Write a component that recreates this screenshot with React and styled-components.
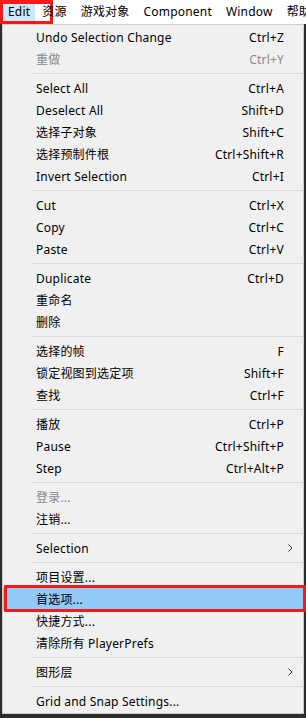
import styled, { createGlobalStyle } from 'styled-components'

const GlobalStyle = createGlobalStyle`
    html, body {
        margin: 0;
        padding: 0;
        background: #2c2c2c;
    }
    body {
        font-family: "Noto Sans", "Noto Sans CJK SC", sans-serif;
        font-size: 12px;
        letter-spacing: 0.2px;
        color: #000;
        overflow: hidden;
    }
`

const topMenus = ['Edit', '资源', '游戏对象', 'Component', 'Window', '帮助']

// '-' = separator
const items = [
    { label: 'Undo Selection Change', key: 'Ctrl+Z' },
    { label: '重做', key: 'Ctrl+Y', disabled: true },
    '-',
    { label: 'Select All', key: 'Ctrl+A' },
    { label: 'Deselect All', key: 'Shift+D' },
    { label: '选择子对象', key: 'Shift+C' },
    { label: '选择预制件根', key: 'Ctrl+Shift+R' },
    { label: 'Invert Selection', key: 'Ctrl+I' },
    '-',
    { label: 'Cut', key: 'Ctrl+X' },
    { label: 'Copy', key: 'Ctrl+C' },
    { label: 'Paste', key: 'Ctrl+V' },
    '-',
    { label: 'Duplicate', key: 'Ctrl+D' },
    { label: '重命名' },
    { label: '删除' },
    '-',
    { label: '选择的帧', key: 'F' },
    { label: '锁定视图到选定项', key: 'Shift+F' },
    { label: '查找', key: 'Ctrl+F' },
    '-',
    { label: '播放', key: 'Ctrl+P' },
    { label: 'Pause', key: 'Ctrl+Shift+P' },
    { label: 'Step', key: 'Ctrl+Alt+P' },
    '-',
    { label: '登录...', disabled: true },
    { label: '注销...' },
    '-',
    { label: 'Selection', sub: true },
    '-',
    { label: '项目设置...' },
    { label: '首选项...', active: true },
    { label: '快捷方式...' },
    { label: '清除所有 PlayerPrefs' },
    '-',
    { label: '图形层', sub: true },
    '-',
    { label: 'Grid and Snap Settings...' },
]

const Chevron = () => (
    <svg width="5" height="8" viewBox="0 0 5 8">
        <polyline points="0.5,0.5 4,4 0.5,7.5" fill="none" stroke="#333" strokeWidth="1" />
    </svg>
)

export default function App() {
    return (
        <>
            <GlobalStyle />
            <MenuBar>
                {topMenus.map((name, i) => (
                    <BarItem key={name} $open={i === 0}>{name}</BarItem>
                ))}
            </MenuBar>
            <Dropdown>
                {items.map((item, i) =>
                    item === '-' ? (
                        <Separator key={i} />
                    ) : (
                        <Row key={i} $active={item.active} $disabled={item.disabled}>
                            <Label>{item.label}</Label>
                            <Shortcut>{item.key}</Shortcut>
                            <Arrow>{item.sub && <Chevron />}</Arrow>
                        </Row>
                    )
                )}
            </Dropdown>
        </>
    )
}

const MenuBar = styled.div`
    display: flex;
    align-items: center;
    height: 24px;
    padding-left: 3px;
    background: #fff;
    white-space: nowrap;
    overflow: hidden;
`

const BarItem = styled.div`
    position: relative;
    height: 21px;
    line-height: 21px;
    margin-bottom: 1px;
    padding: 0 ${p => (p.$open ? '5px' : '7px')};
    background: ${p => (p.$open ? '#cce8ff' : 'transparent')};

    ${p => p.$open && `
        &::after {
            content: '';
            position: absolute;
            left: -3px;
            top: -1px;
            width: 53px;
            height: 24px;
            box-sizing: border-box;
            border: 3px solid #f41a1a;
            border-top-width: 4px;
        }
    `}
`

const Dropdown = styled.div`
    width: 300px;
    margin-left: 2px;
    padding: 1px 0;
    background: #f0f0f0;
    border: 1px solid #cccccc;
`

const Row = styled.div`
    position: relative;
    display: grid;
    grid-template-columns: 1fr auto 19px;
    align-items: center;
    height: 22px;
    padding-left: 33px;
    background: ${p => (p.$active ? '#91c9f7' : 'transparent')};
    color: ${p => (p.$disabled ? '#8a8a8a' : '#000')};
    white-space: nowrap;

    ${p => p.$active && `
        &::after {
            content: '';
            position: absolute;
            left: 1px;
            right: -3px;
            top: -3px;
            bottom: -2px;
            border: 3px solid #f41a1a;
            border-radius: 1px;
        }
    `}
`

const Label = styled.span``

const Shortcut = styled.span`
    text-align: right;
`

const Arrow = styled.span`
    display: flex;
    align-items: center;
    padding-left: 4px;
`

const Separator = styled.div`
    height: 7px;
    margin-left: 29px;
    display: flex;
    align-items: center;

    &::before {
        content: '';
        flex: 1;
        height: 1px;
        background: #d9d9d9;
    }
`
